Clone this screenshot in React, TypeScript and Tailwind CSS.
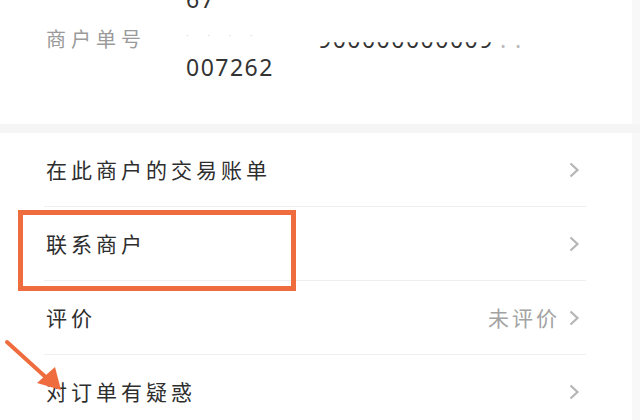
const cjk = "font-['Noto_Sans_CJK_SC','Noto_Sans',sans-serif]";

function Chevron() {
  return (
    <svg width="12" height="18" viewBox="0 0 12 18" className="shrink-0">
      <polyline points="2.5,2.5 9.5,9 2.5,15.5" fill="none" stroke="#b5b5b5" strokeWidth="2.2" />
    </svg>
  );
}

function Row({ title, extra, last }: { title: string; extra?: string; last?: boolean }) {
  return (
    <div className={`ml-[44px] mr-[46px] h-[74px] flex items-center justify-between ${last ? "" : "border-b border-[#efefef]"}`}>
      <span className="ml-[2px] text-[21px] tracking-[4px] text-[#2e2e2e]">{title}</span>
      <div className="flex items-center gap-[8px] mr-[6px]">
        {extra && <span className="text-[21px] tracking-[3px] text-[#a3a3a3]">{extra}</span>}
        <Chevron />
      </div>
    </div>
  );
}

export default function App() {
  return (
    <div className={`relative w-[640px] h-[420px] overflow-hidden bg-[#f8f8f8] ${cjk}`}>
      <div className="w-[632px] bg-white">
        {/* order info, scrolled */}
        <div className="h-[124px] overflow-hidden">
          <div className="-mt-[15px] flex">
            <div className="w-[186px]" />
            <div className="font-['Noto_Sans',sans-serif] text-[23px] leading-[28px] tracking-[1.5px] text-[#333]">67</div>
          </div>
          <div className="mt-[12px] flex">
            <div className="w-[186px] pl-[46px] text-[20px] leading-[28px] tracking-[5px] text-[#9a9a9a]">商户单号</div>
            <div className="font-['Noto_Sans',sans-serif] text-[23px] leading-[28px] tracking-[1.5px] text-[#333]">
              <div className="flex items-center">
                <span className="w-[132px] text-[10px] tracking-[8px] text-[#ddd] -mt-[8px]">· · · ·</span>
                <span className="[clip-path:inset(62%_0_0_0)]">900000000009</span>
                <span className="ml-[6px] text-[#bbb] [clip-path:inset(62%_0_0_0)]">. :</span>
              </div>
              <div>007262</div>
            </div>
          </div>
        </div>
      </div>
      <div className="h-[9px] bg-[#f5f5f5]" />
      <div className="w-[632px] bg-white">
        <Row title="在此商户的交易账单" />
        <Row title="联系商户" />
        <Row title="评价" extra="未评价" />
        <Row title="对订单有疑惑" last />
      </div>

      {/* annotation box */}
      <div className="absolute left-[18px] top-[210px] w-[278px] h-[81px] border-[5px] border-[#ef6c3e]" />
      {/* annotation arrow */}
      <svg className="absolute left-0 top-[330px]" width="80" height="70" viewBox="0 0 80 70">
        <line x1="7" y1="12" x2="50" y2="51" stroke="#ef6c3e" strokeWidth="4" strokeLinecap="round" />
        <polygon points="61,60 37,53 55,37" fill="#ef6c3e" />
      </svg>
    </div>
  );
}
